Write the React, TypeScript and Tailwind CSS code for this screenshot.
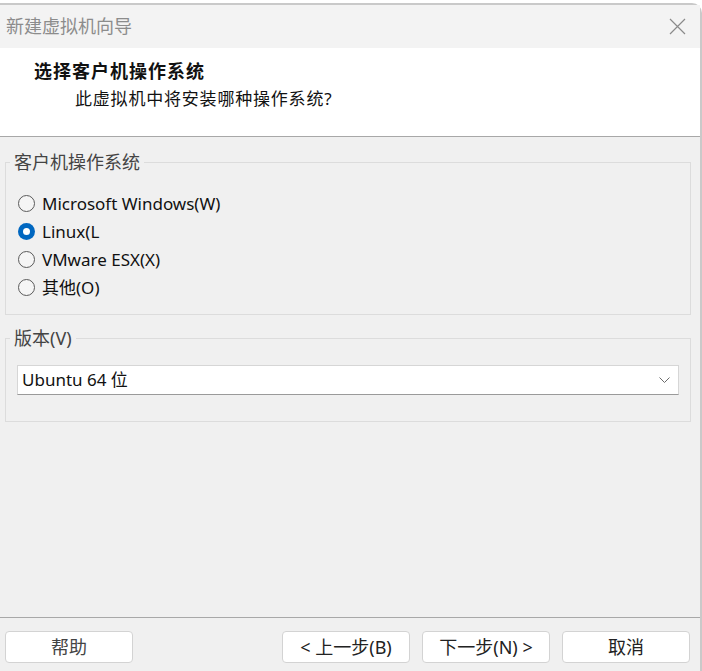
import React from "react";

const sans = { fontFamily: '"Noto Sans", "Noto Sans CJK SC", sans-serif' };

function Radio({ label, checked }: { label: string; checked?: boolean }) {
  return (
    <div className="flex h-[28px] items-center">
      {checked ? (
        <span className="flex h-[17px] w-[17px] items-center justify-center rounded-full bg-[#0067c0]">
          <span className="h-[7px] w-[7px] rounded-full bg-white" />
        </span>
      ) : (
        <span className="h-[17px] w-[17px] rounded-full border border-[#5a5a5a] bg-[#f5f5f5]" />
      )}
      <span className="ml-[7px] text-[17px] leading-none text-[#111]">{label}</span>
    </div>
  );
}

function Btn({ children, className = "" }: { children: React.ReactNode; className?: string }) {
  return (
    <button
      className={`flex h-[32px] w-[128px] items-center justify-center rounded-[4px] border border-[#d3d3d3] bg-white text-[18px] text-[#222] ${className}`}
    >
      {children}
    </button>
  );
}

export default function App() {
  return (
    <div className="h-[671px] w-[702px] overflow-hidden bg-white pt-[3px]" style={sans}>
      <div className="flex h-[668px] flex-col rounded-tr-[10px] border-t-2 border-r-2 border-[#c9c9c9] bg-[#f0f0f0]">
        {/* Title bar */}
        <div className="flex h-[43px] items-center justify-between bg-[#f3f3f3] pl-[6px] pr-[14px]">
          <span className="text-[18px] text-[#8c8c8c]">新建虚拟机向导</span>
          <svg width="17" height="17" viewBox="0 0 17 17">
            <path d="M1 1 L16 16 M16 1 L1 16" stroke="#8a8a8a" strokeWidth="1.2" fill="none" />
          </svg>
        </div>
        {/* Header */}
        <div className="h-[89px] border-b border-[#a8a8a8] bg-white pt-[11px]">
          <div className="pl-[34px] text-[18px] font-bold leading-[24px] tracking-[1px] text-[#111]">选择客户机操作系统</div>
          <div className="mt-[4px] pl-[75px] text-[17px] leading-[24px] tracking-[0.8px] text-[#111]">此虚拟机中将安装哪种操作系统?</div>
        </div>
        {/* Body */}
        <div className="flex-1 pl-[5px] pr-[9px] pt-[13px]">
          <fieldset className="border border-[#dcdcdc] pb-[13px]">
            <legend className="ml-[4px] px-[4px] text-[18px] leading-[24px] text-[#444]">客户机操作系统</legend>
            <div className="pl-[12px] pt-[15px]">
              <Radio label="Microsoft Windows(W)" />
              <Radio label="Linux(L" checked />
              <Radio label="VMware ESX(X)" />
              <Radio label="其他(O)" />
            </div>
          </fieldset>
          <fieldset className="mt-[11px] border border-[#dcdcdc] px-[11px] pb-[26px]">
            <legend className="ml-[-7px] px-[4px] text-[18px] leading-[24px] text-[#444]">版本(V)</legend>
            <div className="mt-[15px] flex h-[30px] items-center justify-between border border-[#d6d6d6] border-b-[#9a9a9a] bg-white pl-[4px] pr-[8px]">
              <span className="text-[17px] text-[#111]">Ubuntu 64 位</span>
              <svg width="11" height="7" viewBox="0 0 11 7">
                <path d="M0.5 0.5 L5.5 5.5 L10.5 0.5" stroke="#6a6a6a" strokeWidth="1" fill="none" />
              </svg>
            </div>
          </fieldset>
        </div>
        {/* Footer */}
        <div className="h-[54px] border-t border-[#a8a8a8] pl-[5px] pr-[10px] pt-[13px]">
          <div className="flex items-start">
            <Btn className="text-[#444]">帮助</Btn>
            <div className="flex-1" />
            <Btn>&lt; 上一步(B)</Btn>
            <Btn className="ml-[12px]">下一步(N) &gt;</Btn>
            <Btn className="ml-[12px]">取消</Btn>
          </div>
        </div>
      </div>
    </div>
  );
}
